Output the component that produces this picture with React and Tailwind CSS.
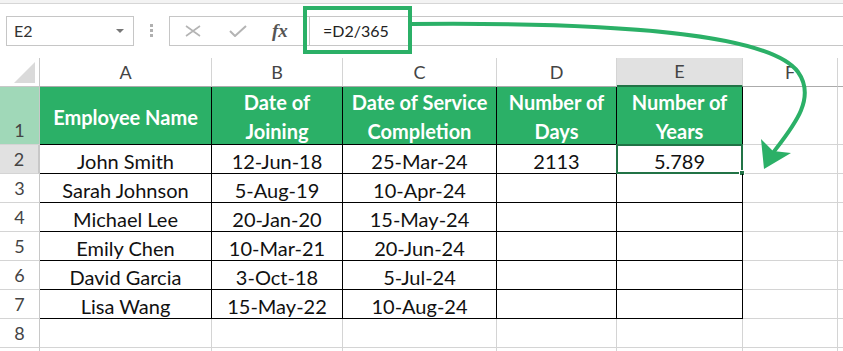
import React from 'react'

const colW = ['w-[172px]', 'w-[131px]', 'w-[154px]', 'w-[120px]', 'w-[126px]', 'w-[95px]']
const letters = ['A', 'B', 'C', 'D', 'E', 'F']

const people = [
	['John Smith', '12-Jun-18', '25-Mar-24', '2113', '5.789'],
	['Sarah Johnson', '5-Aug-19', '10-Apr-24', '', ''],
	['Michael Lee', '20-Jan-20', '15-May-24', '', ''],
	['Emily Chen', '10-Mar-21', '20-Jun-24', '', ''],
	['David Garcia', '3-Oct-18', '5-Jul-24', '', ''],
	['Lisa Wang', '15-May-22', '10-Aug-24', '', ''],
]

const headers = ['Employee Name', 'Date of Joining', 'Date of Service Completion', 'Number of Days', 'Number of Years']

function RowHead({ n, tall, selected, tinted }) {
	let cls = 'w-[40px] shrink-0 flex items-end justify-center border-r border-b border-r-[#c8c8c8] border-b-[#d4d4d4] text-[18px] text-[#444] leading-[28px]'
	if (tall) cls += ' h-[58px]'
	else cls += ' h-[29px]'
	if (tinted) cls += ' bg-[#a0d8b8]'
	if (selected) cls += ' bg-[#e1e1e1] border-r-2 border-r-[#217346]'
	return <div className={cls}>{n}</div>
}

export default function App() {
	return (
		<div className="relative w-[843px] h-[351px] overflow-hidden bg-white" style={{ fontFamily: 'Lato, "Open Sans", sans-serif' }}>
			{/* top strip */}
			<div className="h-[3px] bg-[#f3f3f3]" />
			<div className="h-[1px] bg-[#d6d6d6]" />

			{/* formula bar */}
			<div className="h-[54px] flex items-start pt-[12px]">
				<div className="ml-[6px] w-[128px] h-[30px] border border-[#c6c6c6] flex items-center justify-between pl-[7px] pr-[9px]">
					<span className="text-[16px] text-[#333]">E2</span>
					<span className="w-0 h-0 border-l-[4px] border-r-[4px] border-t-[4px] border-l-transparent border-r-transparent border-t-[#777]" />
				</div>
				<div className="ml-[16px] w-[3px] mt-[8px] flex flex-col gap-[2px]">
					<div className="h-[3px] bg-[#b0b0b0]" />
					<div className="h-[3px] bg-[#b0b0b0]" />
					<div className="h-[3px] bg-[#b0b0b0]" />
				</div>
				<div className="ml-[16px] flex-1 h-[30px] border-t border-b border-l border-[#c6c6c6] flex items-center">
					<div className="w-[140px] h-full flex items-center border-r border-[#c6c6c6]">
						<svg width="16" height="12" viewBox="0 0 16 12" className="ml-[15px]">
							<path d="M1 1 L15 11 M15 1 L1 11" stroke="#b4b4b4" strokeWidth="1.6" fill="none" />
						</svg>
						<svg width="18" height="12" viewBox="0 0 18 12" className="ml-[28px]">
							<path d="M1 6 L6 11 L17 1" stroke="#b4b4b4" strokeWidth="2" fill="none" />
						</svg>
						<span className="ml-[25px] text-[19px] italic font-bold text-[#555]" style={{ fontFamily: '"Liberation Serif", serif' }}>fx</span>
					</div>
					<span className="ml-[13px] text-[16px] text-[#222]">=D2/365</span>
				</div>
			</div>

			{/* column headers */}
			<div className="flex h-[29px]">
				<div className="w-[40px] shrink-0 border-r border-b border-[#c8c8c8] flex items-end justify-end pr-[4px] pb-[3px]">
					<svg width="21" height="21" viewBox="0 0 21 21">
						<polygon points="21,0 21,21 0,21" fill="#dadada" />
					</svg>
				</div>
				{letters.map((l, i) => (
					<div
						key={l}
						className={`${colW[i]} shrink-0 flex items-center justify-center text-[18px] text-[#444] border-r border-r-[#d4d4d4] ${l === 'E' ? 'bg-[#e1e1e1] border-b-2 border-b-[#217346]' : 'border-b border-b-[#ababab]'}`}
					>
						{l}
					</div>
				))}
				<div className="flex-1 border-b border-[#ababab]" />
			</div>

			{/* row 1 */}
			<div className="flex">
				<RowHead n="1" tall tinted />
				{headers.map((h, i) => (
					<div key={h} className={`${colW[i]} shrink-0 h-[58px] bg-[#2bb067] border-r border-b border-black flex items-center justify-center text-center text-white font-bold text-[20px] leading-[29px] pt-[3px]`}>
						{h}
					</div>
				))}
				<div className={`${colW[5]} shrink-0 h-[58px] border-r border-b border-[#d4d4d4]`} />
				<div className="flex-1 border-b border-[#d4d4d4]" />
			</div>

			{/* data rows */}
			{people.map((row, r) => (
				<div key={r} className="flex">
					<RowHead n={r + 2} selected={r === 0} />
					{row.map((v, i) => (
						<div key={i} className={`${colW[i]} shrink-0 h-[29px] border-r border-b border-black flex items-center justify-center text-[20px] text-[#111] pt-[3px] relative`}>
							{v}
							{r === 0 && i === 4 && (
								<div className="absolute -left-[1px] -top-[1px] -right-[1px] -bottom-[1px] border-2 border-[#217346]">
									<div className="absolute -right-[4px] -bottom-[4px] w-[6px] h-[6px] bg-[#217346] border border-white" />
								</div>
							)}
						</div>
					))}
					<div className={`${colW[5]} shrink-0 h-[29px] border-r border-b border-[#d4d4d4]`} />
					<div className="flex-1 border-b border-[#d4d4d4]" />
				</div>
			))}

			{/* row 8 + partial row 9 */}
			{['8', ''].map((n, k) => (
				<div key={k} className="flex">
					<RowHead n={n} />
					{colW.map((w, i) => (
						<div key={i} className={`${w} shrink-0 h-[29px] border-r border-b border-[#d4d4d4]`} />
					))}
					<div className="flex-1 border-b border-[#d4d4d4]" />
				</div>
			))}

			{/* annotation: highlight box + arrow */}
			<div className="absolute left-[303px] top-[6px] w-[109px] h-[48px] border-[4px] border-[#2bb067]" />
			<svg className="absolute left-0 top-0" width="843" height="351" viewBox="0 0 843 351">
				<path d="M411 24 C620 22 770 34 798 72 C818 100 790 130 769 158" stroke="#2bb067" strokeWidth="4" fill="none" />
				<polygon points="764,169 761,139 773,151 791,153" fill="#2bb067" />
			</svg>
		</div>
	)
}
